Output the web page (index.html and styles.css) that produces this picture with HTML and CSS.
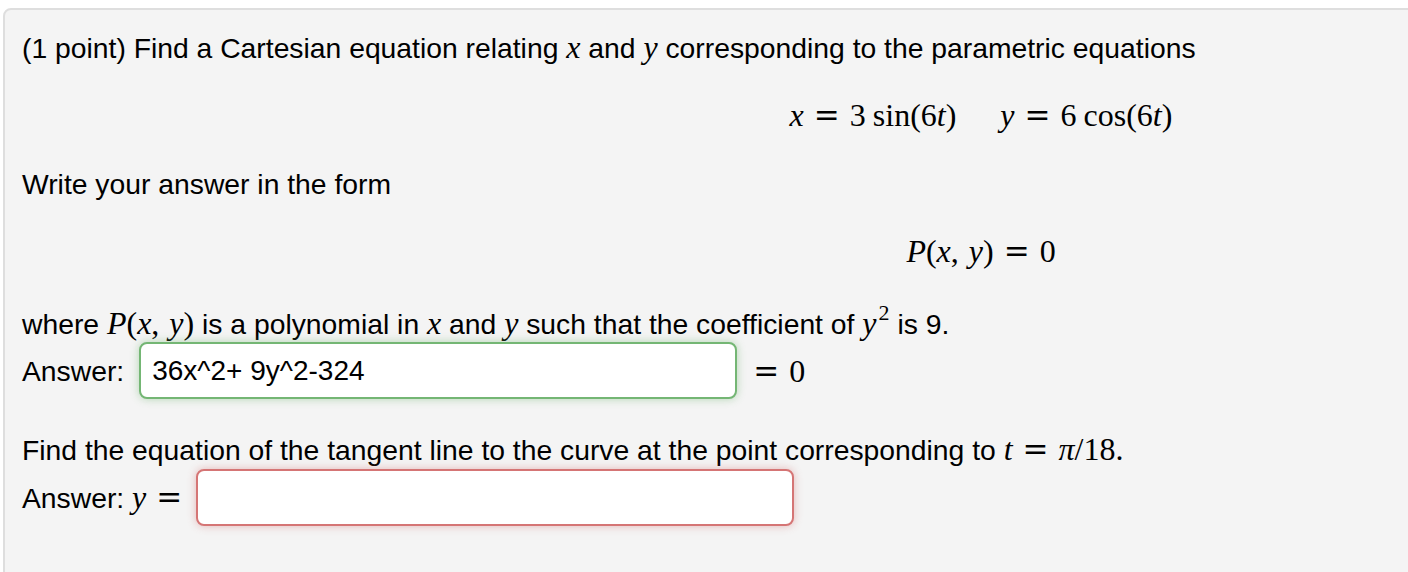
FILE: index.html
```html
<!DOCTYPE html>
<html lang="en">

<head>
    <meta charset="UTF-8">
    <meta name="viewport" content="width=device-width, initial-scale=1.0">
    <title>Parametric Equations</title>
    <link rel="stylesheet" href="styles.css">
</head>

<body>
    <main>
        <div class="problem">
            <p class="line">(1 point) Find a Cartesian equation relating <span class="m"><i>x</i></span> and <span class="m"><i>y</i></span> corresponding to the parametric equations</p>

            <div class="display">
                <span class="m"><i>x</i><span class="rel">=</span>3<span class="thin"></span>sin(6<i>t</i>)</span><span class="m quad"><i>y</i><span class="rel">=</span>6<span class="thin"></span>cos(6<i>t</i>)</span>
            </div>

            <p class="line">Write your answer in the form</p>

            <div class="display">
                <span class="m"><i>P</i>(<i>x</i>,<span class="comma"></span><i>y</i>)<span class="rel">=</span>0</span>
            </div>

            <p class="line">where <span class="m"><i>P</i>(<i>x</i>,<span class="comma"></span><i>y</i>)</span> is a polynomial in <span class="m"><i>x</i></span> and <span class="m"><i>y</i></span> such that the coefficient of <span class="m"><i>y</i><span class="sup">2</span></span> is 9.</p>

            <div class="answer-row">
                <span>Answer:</span>
                <input class="ans ans-ok" type="text" value="36x^2+ 9y^2-324">
                <span class="m after"><span class="rel first">=</span>0</span>
            </div>

            <p class="line next">Find the equation of the tangent line to the curve at the point corresponding to <span class="m"><i>t</i><span class="rel">=</span><i>π</i>/18.</span></p>

            <div class="answer-row tight">
                <span>Answer: <span class="m"><i>y</i><span class="rel">=</span></span></span>
                <input class="ans ans-bad" type="text" value="">
            </div>
        </div>
    </main>
</body>

</html>
```

FILE: styles.css
```css
* {
    margin: 0;
    padding: 0;
    box-sizing: border-box;
}

body {
    overflow: hidden;
    margin: 8px 0 0 3px;
    background: #fff;
    color: #000;
    font-family: "Liberation Sans", Arial, sans-serif;
    font-size: 28.3px;
    line-height: 36px;
}

.problem {
    width: 1956px;
    min-height: 620px;
    padding: 20px 17px 0 17px;
    background: #f4f4f4;
    border: 2px solid #dedede;
    border-radius: 8px;
}

.line {
    height: 36px;
    white-space: nowrap;
}

.display {
    margin: 32px 0;
    height: 36px;
    text-align: center;
    white-space: nowrap;
}

/* math bits */
.m {
    font-family: "Liberation Serif", "Times New Roman", serif;
    font-size: 32px;
    line-height: 1;
}

.m i {
    font-style: italic;
}

.rel {
    display: inline-block;
    margin: 0 10px;
    font-family: "DejaVu Serif", serif;
    font-size: 31px;
}

.rel.first {
    margin-left: 0;
}

.thin {
    display: inline-block;
    width: 7px;
}

.comma {
    display: inline-block;
    width: 10px;
}

.quad {
    margin-left: 44px;
}

.sup {
    display: inline-block;
    margin-left: 2px;
    font-size: 22px;
    vertical-align: 14px;
}

.answer-row {
    display: flex;
    align-items: center;
    margin-top: 4px;
}

.answer-row.tight {
    margin-top: 1px;
}

.line.next {
    margin-top: 33px;
}

.ans {
    width: 598px;
    height: 57px;
    margin: 0 16px 0 15px;
    padding: 0 11px;
    border-radius: 8px;
    background: #fff;
    font-family: "Liberation Sans", Arial, sans-serif;
    font-size: 28px;
    color: #000;
    outline: 0;
}

.tight .ans {
    margin-left: 4px;
}

.ans-ok {
    border: 2px solid #74b674;
    box-shadow: 0 0 8px rgba(100, 175, 100, 0.45);
}

.ans-bad {
    border: 2px solid #d57575;
    box-shadow: 0 0 9px rgba(210, 110, 110, 0.45);
}
```
